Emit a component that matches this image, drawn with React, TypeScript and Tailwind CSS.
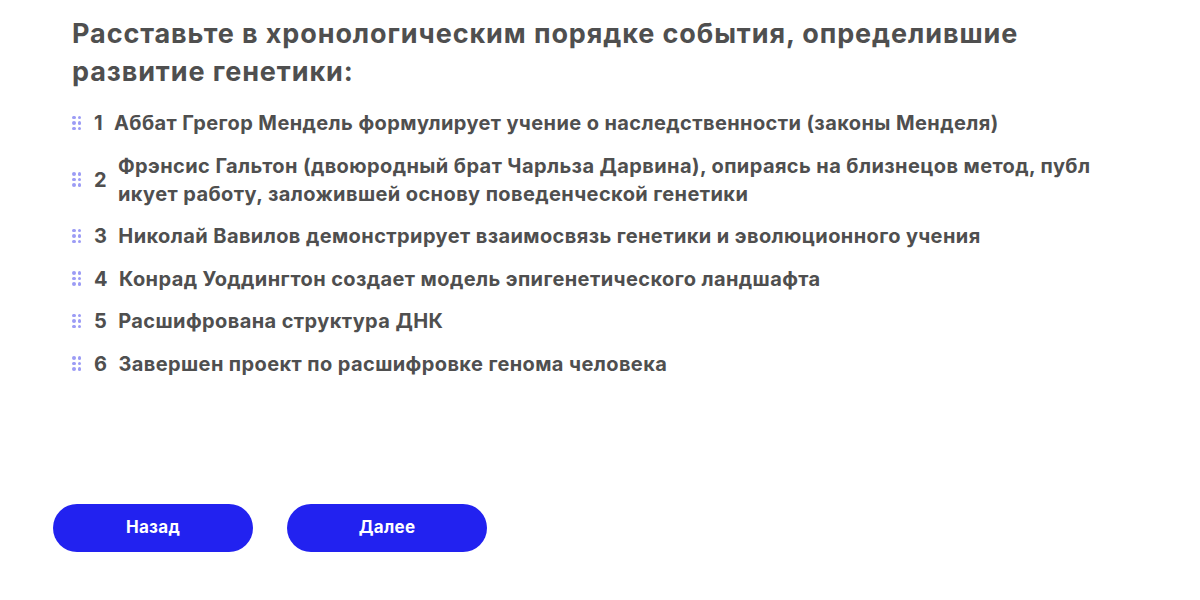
import React from 'react';

const items: { n: number; lines: string[] }[] = [
  { n: 1, lines: ['Аббат Грегор Мендель формулирует учение о наследственности (законы Менделя)'] },
  {
    n: 2,
    lines: [
      'Фрэнсис Гальтон (двоюродный брат Чарльза Дарвина), опираясь на близнецов метод, публ',
      'икует работу, заложившей основу поведенческой генетики',
    ],
  },
  { n: 3, lines: ['Николай Вавилов демонстрирует взаимосвязь генетики и эволюционного учения'] },
  { n: 4, lines: ['Конрад Уоддингтон создает модель эпигенетического ландшафта'] },
  { n: 5, lines: ['Расшифрована структура ДНК'] },
  { n: 6, lines: ['Завершен проект по расшифровке генома человека'] },
];

const Handle: React.FC = () => (
  <div className="grid grid-cols-2 gap-x-[2px] gap-y-[2px] w-[9px] shrink-0">
    {Array.from({ length: 6 }).map((_, i) => (
      <span key={i} className="w-[3.5px] h-[3.5px] rounded-full bg-[#9c9cf5]" />
    ))}
  </div>
);

const App: React.FC = () => {
  return (
    <div
      className="w-[1200px] h-[600px] bg-white flex flex-col text-[#4f4f4f]"
      style={{ fontFamily: 'Inter, "Noto Sans", sans-serif' }}
    >
      <div className="pl-[72px] pt-[15px]">
        <h1 className="text-[27px] leading-[38px] font-bold tracking-[0.9px] w-[1100px]">
          Расставьте в хронологическим порядке события, определившие
          <br />
          развитие генетики:
        </h1>
        <ul className="mt-[18px] flex flex-col gap-[14.5px]">
          {items.map(item => (
            <li key={item.n} className="flex items-center text-[20px] leading-[28px] font-bold tracking-[0.4px]">
              <Handle />
              <span className="ml-[13px]">{item.n}</span>
              <span className="ml-[11px]">
                {item.lines.map((l, i) => (
                  <span key={i} className="block whitespace-nowrap">
                    {l}
                  </span>
                ))}
              </span>
            </li>
          ))}
        </ul>
      </div>
      <div className="mt-auto mb-[48px] pl-[53px] flex gap-[34px]">
        <button className="w-[200px] h-[48px] rounded-full bg-[#2222f0] text-white font-bold text-[17px] tracking-[0.3px]">
          Назад
        </button>
        <button className="w-[200px] h-[48px] rounded-full bg-[#2222f0] text-white font-bold text-[17px] tracking-[0.3px]">
          Далее
        </button>
      </div>
    </div>
  );
};

export default App;
